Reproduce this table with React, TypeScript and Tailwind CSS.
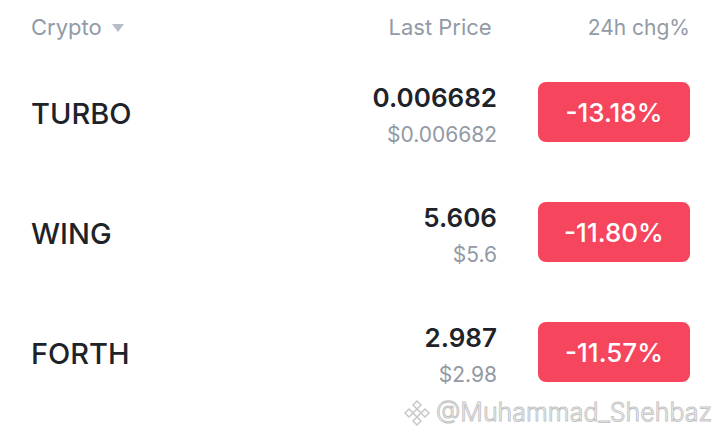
import React from "react";

type Row = { sym: string; price: string; usd: string; chg: string };

const rows: Row[] = [
  { sym: "TURBO", price: "0.006682", usd: "$0.006682", chg: "-13.18%" },
  { sym: "WING", price: "5.606", usd: "$5.6", chg: "-11.80%" },
  { sym: "FORTH", price: "2.987", usd: "$2.98", chg: "-11.57%" },
];

export default function App() {
  return (
    <div className="relative h-[431px] w-[720px] overflow-hidden bg-white font-['Inter','Noto_Sans',sans-serif]">
      <div className="flex h-[52px] items-center pl-[31px] pr-[30px] pt-[3px] text-[22px] text-[#929aa5]">
        <div className="flex flex-1 items-center gap-[9px]">
          <span>Crypto</span>
          <svg width="14" height="10" viewBox="0 0 14 10">
            <path d="M1 1h12L7 9z" fill="#b7bdc6" />
          </svg>
        </div>
        <span className="mr-[96px]">Last Price</span>
        <span className="text-[21px]">24h chg%</span>
      </div>

      {rows.map((r) => (
        <div key={r.sym} className="flex h-[120px] items-center pl-[31px] pr-[30px]">
          <div className="flex-1 pt-[3px] text-[29px] font-medium text-[#1e2329]">{r.sym}</div>
          <div className="flex flex-col items-end pt-[4px]">
            <span className="text-[26px] font-semibold leading-[36px] text-[#1e2329]">{r.price}</span>
            <span className="mt-[5px] text-[21px] leading-[28px] text-[#929aa5]">{r.usd}</span>
          </div>
          <div className="ml-[41px] flex h-[60px] w-[152px] items-center justify-center rounded-[8px] bg-[#f6465d] text-[26px] font-medium text-white">
            {r.chg}
          </div>
        </div>
      ))}

      <div className="absolute right-[8px] top-[394px] flex items-center gap-[4px]">
        <svg width="30" height="30" viewBox="0 0 30 30" fill="none" stroke="#c8c8c8" strokeWidth="1.5">
          <path d="M15 3l4 4-4 4-4-4z" />
          <path d="M7 11l4 4-4 4-4-4z" />
          <path d="M23 11l4 4-4 4-4-4z" />
          <path d="M15 19l4 4-4 4-4-4z" />
          <path d="M11 15l4-4 4 4-4 4z" />
        </svg>
        <span className="text-[25px] font-light text-white [-webkit-text-stroke:1px_#c4c4c4]">
          @Muhammad_Shehbaz
        </span>
      </div>
    </div>
  );
}
